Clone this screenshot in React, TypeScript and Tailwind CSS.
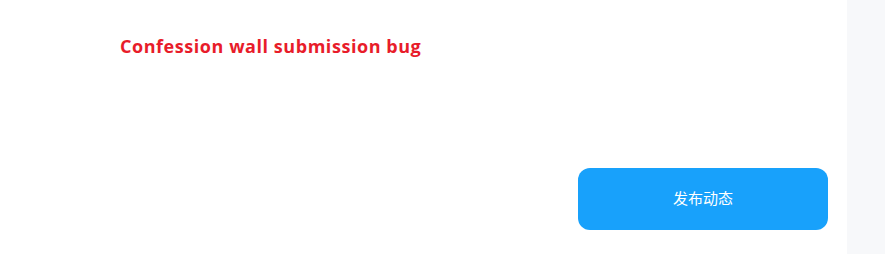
export default function App() {
  return (
    <div className="flex h-[254px] w-[885px] bg-white font-['Open_Sans','Noto_Sans_CJK_SC',sans-serif]">
      <main className="flex flex-1 flex-col pl-[120px] pr-[19px] pt-[33px]">
        <h1 className="text-[18px] font-bold leading-[26px] tracking-[0.55px] text-[#e81c2a]">Confession wall submission bug</h1>
        <div className="mt-[109px] flex justify-end">
          <button className="h-[62px] w-[250px] rounded-[12px] bg-[#18a1fb] pb-[2px] text-[15px] text-white">
            发布动态
          </button>
        </div>
      </main>
      <aside className="w-[38px] bg-[#f7f8fa]" />
    </div>
  )
}
